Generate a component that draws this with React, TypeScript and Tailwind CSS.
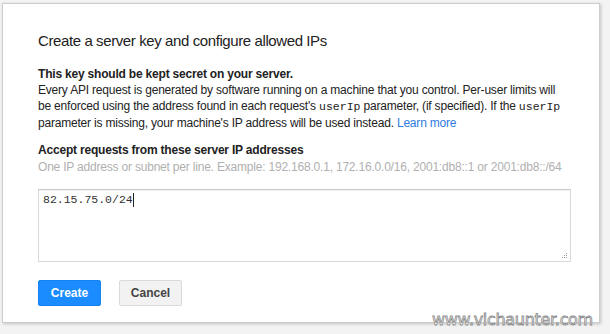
import React from 'react';

const sans = { fontFamily: '"Liberation Sans", Arial, sans-serif' };

export default function App() {
  return (
    <div className="relative w-[610px] h-[334px] overflow-hidden bg-[#f3f3f3] pt-[3px] pl-[2px]" style={sans}>
      <div className="w-[598px] h-[320px] bg-white border border-[#cdcdcd] shadow-[1px_1px_3px_rgba(0,0,0,0.2)] pl-[35px] pt-[28px] text-[#222]">
        <h1 className="text-[15px] leading-[18px] tracking-[-0.4px] text-[#222] whitespace-nowrap">
          Create a server key and configure allowed IPs
        </h1>

        {/* Secret key notice */}
        <div className="mt-[16px] text-[12px] leading-[16px] tracking-[-0.2px] whitespace-nowrap">
          <p className="font-bold">This key should be kept secret on your server.</p>
          <p>
            Every API request is generated by software running on a machine that you control. Per-user limits will
            <br />
            be enforced using the address found in each request's <Code>userIp</Code> parameter, (if specified). If the <Code>userIp</Code>
            <br />
            parameter is missing, your machine's IP address will be used instead.{' '}
            <a className="text-[#2f7be0]">Learn more</a>
          </p>
        </div>

        {/* Allowed IPs */}
        <div className="mt-[11px] text-[12px] leading-[16px] tracking-[-0.2px] whitespace-nowrap">
          <p className="font-bold">Accept requests from these server IP addresses</p>
          <p className="mt-[1px] text-[#b0b0b0]">
            One IP address or subnet per line. Example: 192.168.0.1, 172.16.0.0/16, 2001:db8::1 or 2001:db8::/64
          </p>
        </div>

        <div className="relative mt-[14px] w-[533px] h-[73px] border border-[#d9d9d9] border-t-[#c8c8c8] shadow-[inset_0_1px_1px_rgba(0,0,0,0.06)] px-[4px] pt-[3px]">
          <div className="flex items-center h-[14px] text-[11.5px] text-[#333]" style={{ fontFamily: '"Liberation Mono", "Courier New", monospace' }}>
            82.15.75.0/24
            <span className="inline-block w-px h-[14px] bg-[#222]" />
          </div>
          <div className="absolute right-[3px] bottom-[3px] grid grid-cols-3 gap-[1px]">
            <span />
            <span />
            <span className="w-px h-px bg-[#999]" />
            <span />
            <span className="w-px h-px bg-[#999]" />
            <span className="w-px h-px bg-[#999]" />
            <span className="w-px h-px bg-[#999]" />
            <span className="w-px h-px bg-[#999]" />
            <span className="w-px h-px bg-[#999]" />
          </div>
        </div>

        <div className="mt-[18px] flex gap-[18px]">
          <button className="w-[63px] h-[26px] rounded-[2px] bg-[#1a8cff] border border-[#1683f0] text-white text-[12px] font-bold">
            Create
          </button>
          <button className="w-[63px] h-[26px] rounded-[2px] bg-[#f2f2f2] border border-[#dadada] text-[#444] text-[12px] font-bold">
            Cancel
          </button>
        </div>
      </div>

      <div
        className="absolute left-[432px] top-[310px] text-[16px] leading-[20px] tracking-[-0.3px] text-white [-webkit-text-stroke:0.8px_#8a8a8a]"
        style={{ fontFamily: '"DejaVu Sans", sans-serif' }}
      >
        www.vichaunter.com
      </div>
    </div>
  );
}

function Code({ children }: { children: React.ReactNode }) {
  return (
    <span className="text-[11.5px] tracking-normal" style={{ fontFamily: '"Liberation Mono", "Courier New", monospace' }}>
      {children}
    </span>
  );
}
